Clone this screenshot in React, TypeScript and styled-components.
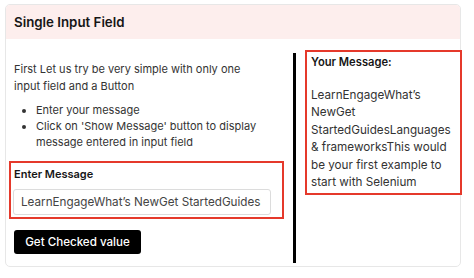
import React, { FC, useState } from 'react';
import styled, { createGlobalStyle } from 'styled-components';

const GlobalStyle = createGlobalStyle`
  html, body {
    margin: 0;
    padding: 0;
    background: #ffffff;
  }

  body {
    font-family: Inter, 'Liberation Sans', sans-serif;
    color: #333333;
  }

  * {
    box-sizing: border-box;
  }
`;

const Page = styled.div`
  padding: 4px 0 0 5px;
`;

const Card = styled.section`
  width: 456px;
  height: 263px;
  border: 1px solid #e7e7e7;
  border-radius: 5px;
  display: flex;
  flex-direction: column;
`;

const Header = styled.header`
  height: 34px;
  background: #fdeeed;
  border-radius: 4px 4px 0 0;
  display: flex;
  align-items: center;
  padding: 0 8px;

  h1 {
    margin: 0;
    font-size: 13.3px;
    font-weight: 600;
    color: #161616;
  }
`;

const Body = styled.div`
  flex: 1;
  display: flex;
`;

const LeftColumn = styled.div`
  flex: 0 0 287px;
  padding: 0 9px 0 3px;
`;

const Intro = styled.p`
  margin: 22px 0 0;
  padding: 0 22px 0 5px;
  font-size: 11px;
  line-height: 17px;
`;

const Steps = styled.ul`
  margin: 7px 0 0;
  padding-left: 27px;
  font-size: 11px;
  line-height: 16px;
`;

const Highlight = styled.div`
  border: 2px solid #e5392b;
`;

const InputBox = styled(Highlight)`
  margin-top: 11px;
  padding: 3px 11px 2px 2px;
`;

const FieldLabel = styled.label`
  display: block;
  padding-left: 1px;
  font-size: 11px;
  line-height: 16px;
  font-weight: 600;
  color: #161616;
`;

const TextInput = styled.input`
  display: block;
  width: 100%;
  height: 26px;
  margin-top: 7px;
  padding: 0 9px 0 7px;
  border: 1px solid #dcdcdc;
  border-radius: 3px;
  font-family: inherit;
  font-size: 11.7px;
  color: #444444;
  background: #ffffff;
  outline: none;
`;

const ActionButton = styled.button`
  margin: 11px 0 0 5px;
  height: 24px;
  width: 127px;
  padding: 0;
  border: none;
  border-radius: 3px;
  background: #000000;
  color: #ffffff;
  font-family: inherit;
  font-size: 11.6px;
  font-weight: 500;
`;

const Divider = styled.div`
  flex: 0 0 3px;
  margin: 14px 0 3px;
  background: #000000;
`;

const RightColumn = styled.div`
  flex: 1;
  min-width: 0;
  padding: 11px 0 0 9px;
  margin-right: -2px;
`;

const MessageBox = styled(Highlight)`
  padding: 2px 4px 1px;
  font-size: 11.7px;
  line-height: 17.5px;

  h2 {
    margin: 0 0 15px;
    font-size: 11.2px;
    line-height: 17.5px;
    font-weight: 600;
    color: #161616;
  }

  p {
    margin: 0;
  }
`;

const App: FC = () => {
  const [value, setValue] = useState(
    'LearnEngageWhat\u2019s NewGet StartedGuidesLanguages & frameworksThis would be your first example to start with Selenium'
  );

  return (
    <>
      <GlobalStyle />
      <Page>
        <Card>
          <Header>
            <h1>Single Input Field</h1>
          </Header>

          <Body>
            <LeftColumn>
              <Intro>First Let us try be very simple with only one input field and a Button</Intro>
              <Steps>
                <li>Enter your message</li>
                <li>Click on 'Show Message' button to display message entered in input field</li>
              </Steps>

              <InputBox>
                <FieldLabel htmlFor="user-message">Enter Message</FieldLabel>
                <TextInput id="user-message" value={value} onChange={(e) => setValue(e.target.value)} />
              </InputBox>

              <ActionButton type="button">Get Checked value</ActionButton>
            </LeftColumn>

            <Divider />

            <RightColumn>
              <MessageBox>
                <h2>Your Message:</h2>
                <p>{value}</p>
              </MessageBox>
            </RightColumn>
          </Body>
        </Card>
      </Page>
    </>
  );
};

export default App;
